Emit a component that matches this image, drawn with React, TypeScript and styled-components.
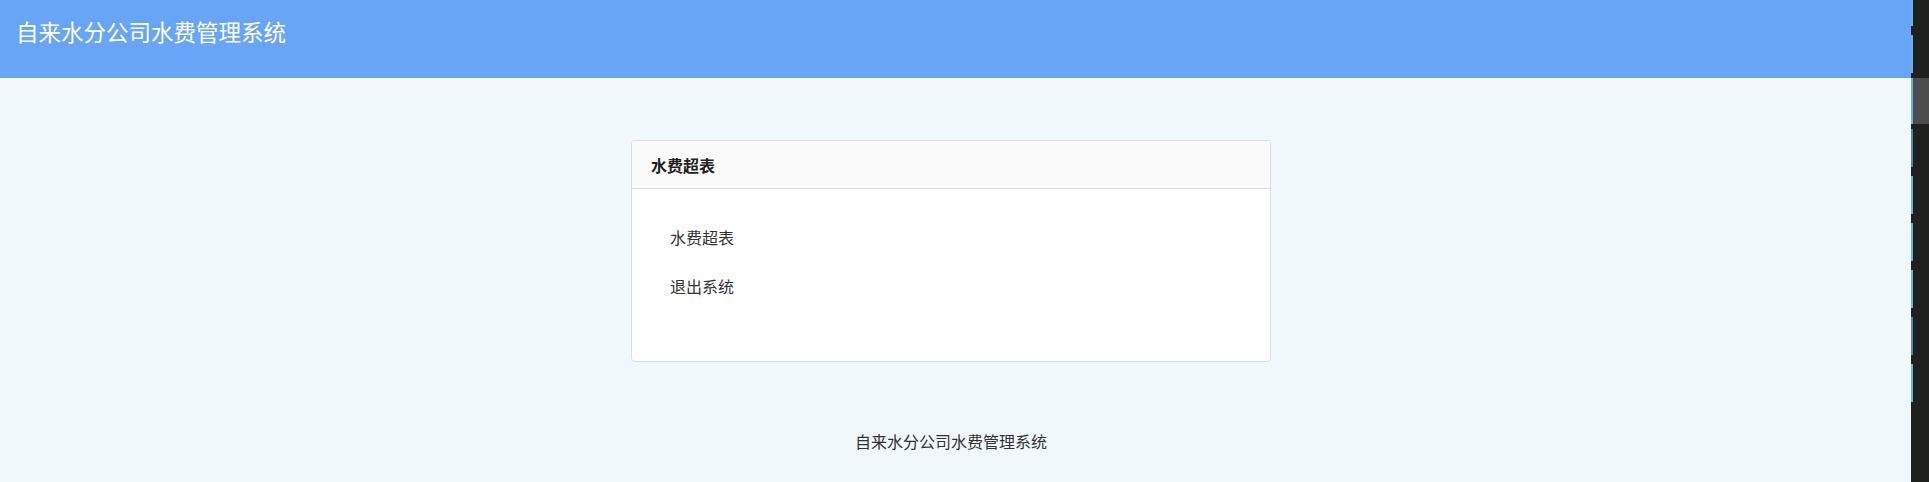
import React from 'react'
import styled, { createGlobalStyle } from 'styled-components'

const GlobalStyle = createGlobalStyle`
  html, body {
    margin: 0;
    padding: 0;
    height: 100%;
    overflow: hidden;
  }
  body {
    font-family: "Noto Sans CJK SC", "Noto Sans", sans-serif;
    color: #333;
    background: #1e211d;
  }
`

const Frame = styled.div`
  display: flex;
  height: 482px;
`

const Page = styled.div`
  flex: 1;
  display: flex;
  flex-direction: column;
  background: #f0f8fb;
`

const TopBar = styled.header`
  height: 78px;
  box-sizing: border-box;
  padding: 15px 16px 0;
  background: #68a5f7;
`

const Brand = styled.h1`
  margin: 0;
  font-size: 22.5px;
  font-weight: 400;
  line-height: 32px;
  color: #fff;
`

const Content = styled.main`
  display: flex;
  flex-direction: column;
  align-items: center;
  padding: 62px 9px 0 0;
`

const Panel = styled.section`
  width: 640px;
  box-sizing: border-box;
  background: #fff;
  border: 1px solid #dddddd;
  border-radius: 4px;
  overflow: hidden;
`

const PanelHeading = styled.div`
  height: 48px;
  box-sizing: border-box;
  padding: 0 19px;
  display: flex;
  align-items: center;
  background: #fafafa;
  border-bottom: 1px solid #dddddd;
  font-size: 16px;
  font-weight: 700;
  color: #222;
`

const PanelBody = styled.ul`
  list-style: none;
  margin: 0;
  padding: 24px 38px 48px;
  height: 172px;
  box-sizing: border-box;
`

const MenuLink = styled.li`
  font-size: 16px;
  line-height: 49px;
  color: #333;
  cursor: pointer;
`

const Footer = styled.footer`
  margin-top: 67px;
  font-size: 16px;
  line-height: 24px;
  color: #333;
`

const Edge = styled.div`
  width: 18px;
  display: flex;
  background: #1e211d;
`

const Seams = styled.div`
  width: 2px;
  display: flex;
  flex-direction: column;
`

const Seam = styled.div<{ $h: number; $tone?: 'light' | 'dark' | 'gap' }>`
  height: ${(p) => p.$h}px;
  flex-shrink: 0;
  background: ${(p) =>
    p.$tone === 'gap' ? '#1e211d' : p.$tone === 'dark' ? '#4f86bf' : '#6aaef0'};
`

const Track = styled.div`
  flex: 1;
  position: relative;
`

const Thumb = styled.div`
  position: absolute;
  top: 78px;
  left: 0;
  right: 0;
  height: 46px;
  background: #4d4d4d;
`

const seams: { h: number; tone?: 'light' | 'dark' | 'gap' }[] = [
  { h: 26 },
  { h: 9, tone: 'gap' },
  { h: 38 },
  { h: 5, tone: 'gap' },
  { h: 46 },
  { h: 5, tone: 'gap' },
  { h: 38, tone: 'dark' },
  { h: 9, tone: 'gap' },
  { h: 38 },
  { h: 9, tone: 'gap' },
  { h: 38 },
  { h: 9, tone: 'gap' },
  { h: 38 },
  { h: 9, tone: 'gap' },
  { h: 38, tone: 'dark' },
  { h: 9, tone: 'gap' },
  { h: 38 },
]

export default function App() {
  return (
    <>
      <GlobalStyle />
      <Frame>
        <Page>
          <TopBar>
            <Brand>自来水分公司水费管理系统</Brand>
          </TopBar>
          <Content>
            <Panel>
              <PanelHeading>水费超表</PanelHeading>
              <PanelBody>
                <MenuLink>水费超表</MenuLink>
                <MenuLink>退出系统</MenuLink>
              </PanelBody>
            </Panel>
            <Footer>自来水分公司水费管理系统</Footer>
          </Content>
        </Page>
        <Edge>
          <Seams>
            {seams.map((s, i) => (
              <Seam key={i} $h={s.h} $tone={s.tone} />
            ))}
          </Seams>
          <Track>
            <Thumb />
          </Track>
        </Edge>
      </Frame>
    </>
  )
}
